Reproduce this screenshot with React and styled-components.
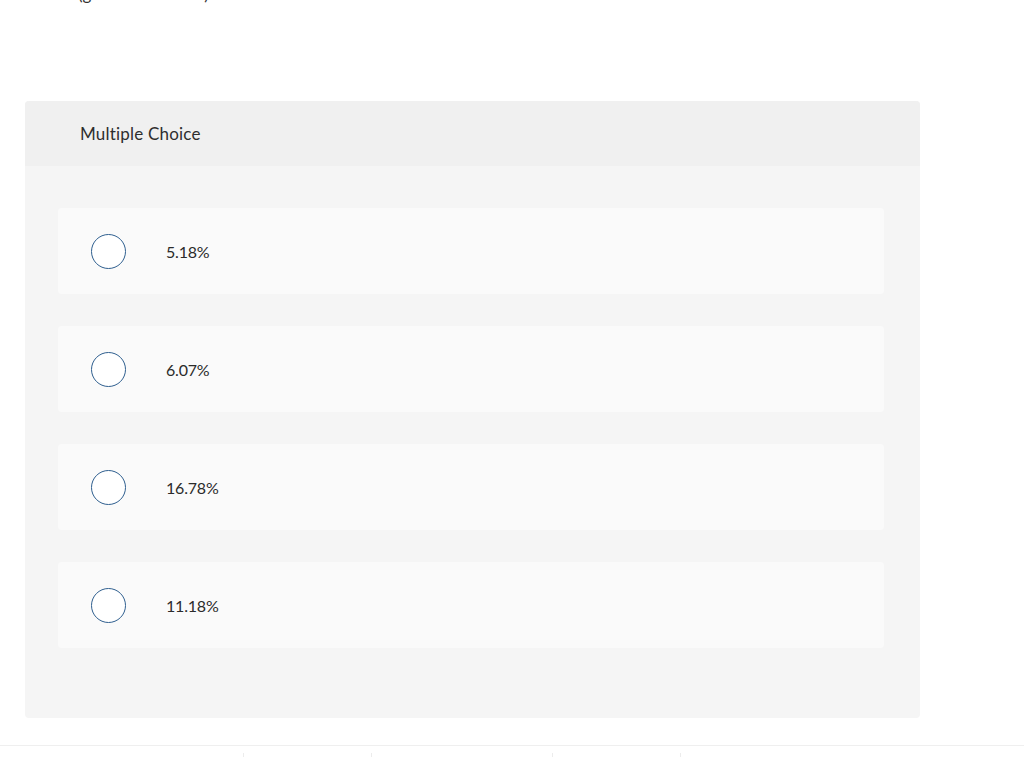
import styled, { createGlobalStyle } from 'styled-components';

const options = ['5.18%', '6.07%', '16.78%', '11.18%'];

export default function App() {
  return (
    <>
      <Global />
      <S.Page>
        <S.Prompt>(given these data).</S.Prompt>
        <S.Card>
          <S.Header>Multiple Choice</S.Header>
          <S.Body>
            {options.map((o) => (
              <S.Option key={o}>
                <S.Radio />
                <S.Label>{o}</S.Label>
              </S.Option>
            ))}
          </S.Body>
        </S.Card>
        <S.Footer>
          <S.Cell $w={243} />
          <S.Cell $w={127} $line />
          <S.Cell $w={180} $line />
          <S.Cell $w={127} $line />
          <S.Cell $w={100} $line />
        </S.Footer>
      </S.Page>
    </>
  );
}

// -------------------------------------------------- styling ----------------------------------------------
const Global = createGlobalStyle`
  body {
    margin: 0;
    background: #fff;
    font-family: Lato, "Open Sans", "Liberation Sans", sans-serif;
    color: #333;
  }
`;

const S = {};

S.Page = styled.div`
  width: 1024px;
  height: 757px;
  overflow: hidden;
  display: flex;
  flex-direction: column;
`;

S.Prompt = styled.p`
  margin: -16px 0 0 78px;
  font-size: 17px;
  line-height: 20px;
  color: #333;
  height: 20px;
  flex: none;
`;

S.Card = styled.div`
  margin: 97px 0 0 25px;
  width: 895px;
  background: #f5f5f5;
  border-radius: 4px;
  overflow: hidden;
  flex: none;
`;

S.Header = styled.div`
  height: 65px;
  background: #f0f0f0;
  display: flex;
  align-items: center;
  padding-left: 55px;
  font-size: 17px;
  color: #2e2e2e;
  letter-spacing: 0.2px;
`;

S.Body = styled.div`
  padding: 42px 36px 70px 33px;
  display: flex;
  flex-direction: column;
  gap: 32px;
`;

S.Option = styled.div`
  height: 86px;
  background: #fafafa;
  border-radius: 4px;
  display: flex;
  align-items: center;
  padding-left: 33px;
`;

S.Radio = styled.span`
  width: 33px;
  height: 33px;
  border: 1.5px solid #2f5f8f;
  border-radius: 50%;
  background: #fff;
  flex: none;
`;

S.Label = styled.span`
  margin-left: 40px;
  font-size: 16px;
  color: #2b2b2b;
  letter-spacing: -0.2px;
`;

S.Footer = styled.div`
  margin-top: 27px;
  border-top: 1px solid #efefef;
  display: flex;
  height: 12px;
  padding-top: 7px;
  flex: none;
`;

S.Cell = styled.div`
  width: ${({ $w }) => $w}px;
  border-left: ${({ $line }) => ($line ? '1px solid #ececec' : 'none')};
`;
